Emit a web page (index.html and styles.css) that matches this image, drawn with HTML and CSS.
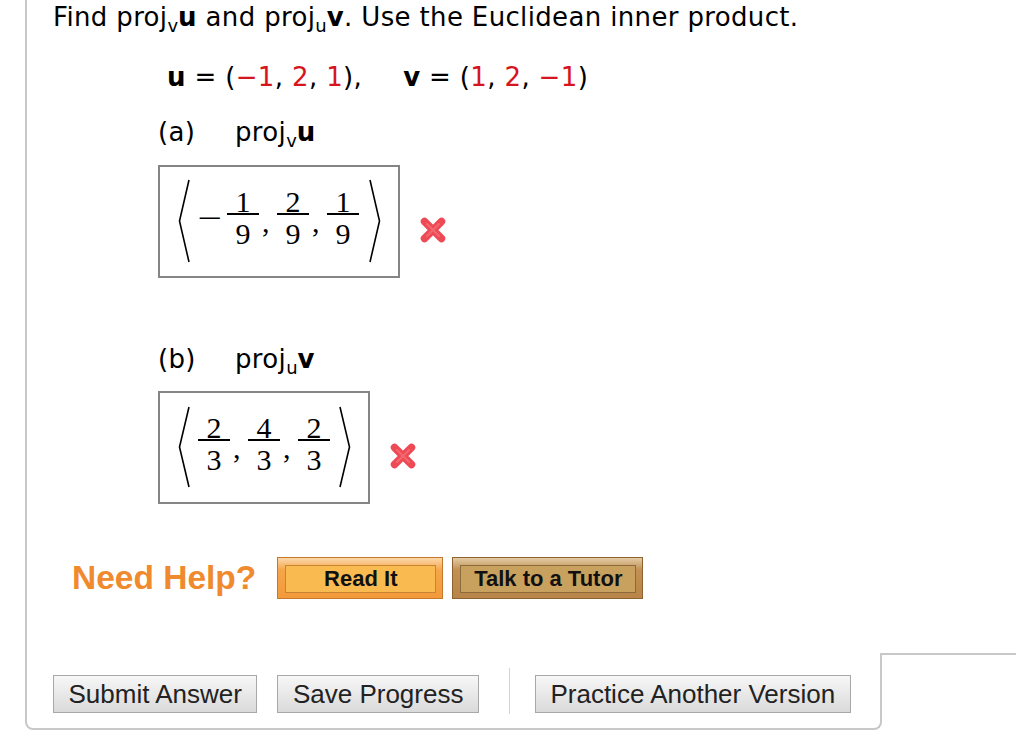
FILE: index.html
```html
<!DOCTYPE html>
<html>
<head>
<meta charset="utf-8">
<link rel="stylesheet" href="styles.css">
</head>
<body>
<div class="page">
  <div class="main">
    <p class="q">Find proj<sub>v</sub><b>u</b> and proj<sub>u</sub><b>v</b>. Use the Euclidean inner product.</p>
    <p class="given"><b>u</b> = (<span class="r">−1</span>, <span class="r">2</span>, <span class="r">1</span>),<span class="gap"></span><b>v</b> = (<span class="r">1</span>, <span class="r">2</span>, <span class="r">−1</span>)</p>

    <div class="part">
      <p class="label"><span class="tag">(a)</span>proj<sub>v</sub><b>u</b></p>
      <div class="answer-row">
        <div class="answer">
          <svg class="br" width="12" height="84" viewBox="0 0 12 84"><polyline points="11,1 1.5,42 11,83" fill="none" stroke="#000" stroke-width="1.6"/></svg>
          <span class="neg">−</span>
          <span class="frac"><span class="num">1</span><span class="den">9</span></span>
          <span class="comma">,</span>
          <span class="frac"><span class="num">2</span><span class="den">9</span></span>
          <span class="comma">,</span>
          <span class="frac"><span class="num">1</span><span class="den">9</span></span>
          <svg class="br br-r" width="12" height="84" viewBox="0 0 12 84"><polyline points="1,1 10.5,42 1,83" fill="none" stroke="#000" stroke-width="1.6"/></svg>
        </div>
        <svg class="wrong" width="28" height="28" viewBox="0 0 28 28"><path d="M5.5 5.5 L22.5 22.5 M22.5 5.5 L5.5 22.5" stroke="#ee4a55" stroke-width="7.5" stroke-linecap="round"/><path d="M8 8 L20 20 M20 8 L8 20" stroke="#f9868c" stroke-width="2" stroke-linecap="round" opacity="0.5"/></svg>
      </div>
    </div>

    <div class="part part-b">
      <p class="label"><span class="tag">(b)</span>proj<sub>u</sub><b>v</b></p>
      <div class="answer-row">
        <div class="answer">
          <svg class="br" width="12" height="84" viewBox="0 0 12 84"><polyline points="11,2 1.5,42 11,82" fill="none" stroke="#000" stroke-width="1.6"/></svg>
          <span class="frac first"><span class="num">2</span><span class="den">3</span></span>
          <span class="comma">,</span>
          <span class="frac"><span class="num">4</span><span class="den">3</span></span>
          <span class="comma">,</span>
          <span class="frac"><span class="num">2</span><span class="den">3</span></span>
          <svg class="br br-r br-rb" width="12" height="84" viewBox="0 0 12 84"><polyline points="1,2 10.5,42 1,82" fill="none" stroke="#000" stroke-width="1.6"/></svg>
        </div>
        <svg class="wrong" width="28" height="28" viewBox="0 0 28 28"><path d="M5.5 5.5 L22.5 22.5 M22.5 5.5 L5.5 22.5" stroke="#ee4a55" stroke-width="7.5" stroke-linecap="round"/><path d="M8 8 L20 20 M20 8 L8 20" stroke="#f9868c" stroke-width="2" stroke-linecap="round" opacity="0.5"/></svg>
      </div>
    </div>

    <div class="help">
      <span class="need">Need Help?</span>
      <a class="hbtn read"><span>Read It</span></a>
      <a class="hbtn talk"><span>Talk to a Tutor</span></a>
    </div>
  </div>
  <div class="bottom">
    <div class="footer">
      <button class="btn">Submit Answer</button>
      <button class="btn">Save Progress</button>
      <span class="vsep"></span>
      <button class="btn">Practice Another Version</button>
    </div>
    <div class="notch"></div>
  </div>
</div>
</body>
</html>
```

FILE: styles.css
```css
body {
  margin: 0;
  font-family: "DejaVu Sans", Verdana, sans-serif;
  color: #000;
  background: #fff;
}

.page {
  margin-left: 25px;
  width: 991px;
}

.main {
  border-left: 2px solid #c8c8c8;
  padding: 1px 0 54px 26px;
}

.q {
  margin: 0;
  font-size: 26px;
  letter-spacing: 0.35px;
  line-height: 32px;
}

sub {
  font-size: 18px;
  line-height: 0;
  vertical-align: -6px;
  letter-spacing: 0;
}

.given {
  margin: 28px 0 0 114px;
  font-size: 26px;
  letter-spacing: 0.35px;
  line-height: 32px;
}

.r {
  color: #d6141e;
}

.gap {
  display: inline-block;
  width: 41px;
}

.part {
  margin-left: 105px;
}

.label {
  margin: 23px 0 0 0;
  font-size: 26px;
  letter-spacing: 0.35px;
  line-height: 32px;
}

.part-b .label {
  margin-top: 65px;
}

.tag {
  display: inline-block;
  width: 77px;
}

.answer-row {
  display: flex;
  align-items: center;
  margin-top: 17px;
}

.part-b .answer-row {
  margin-top: 16px;
}

.answer {
  flex: none;
  display: flex;
  align-items: center;
  border: 2px solid #858585;
  padding: 12px 17px 13px 18px;
  font-family: "Liberation Serif", "Times New Roman", serif;
  font-size: 30px;
}

.answer > * {
  flex: none;
}

.br {
  display: block;
}

.br-r {
  margin-left: 10px;
}

.br-rb {
  margin-left: 9px;
}

.neg {
  display: inline-block;
  width: 24px;
  text-align: center;
  line-height: 32px;
  margin: 0 5px 6px 8px;
  transform: scaleX(1.45);
}

.frac {
  display: block;
  width: 32px;
  margin-bottom: 6px;
  text-align: center;
}

.frac.first {
  margin-left: 8px;
}

.num,
.den {
  display: block;
  line-height: 32px;
}

.num {
  margin-bottom: -5px;
}

.den {
  border-top: 2px solid #000;
  padding-top: 3px;
  height: 32px;
}

.comma {
  width: 18px;
  box-sizing: border-box;
  padding-left: 3px;
  line-height: 32px;
  margin-top: 2px;
}

.wrong {
  margin-left: 19px;
  margin-top: 16px;
}

.help {
  display: flex;
  align-items: center;
  margin: 53px 0 0 19px;
  height: 42px;
}

.need {
  font-family: "Liberation Sans", Arial, sans-serif;
  font-weight: bold;
  font-size: 33.5px;
  color: #f08a2e;
}

.hbtn {
  box-sizing: border-box;
  height: 42px;
  display: flex;
  padding: 7px 6px 5px 7px;
  border: 1px solid;
}

.hbtn span {
  flex: 1;
  display: flex;
  align-items: center;
  justify-content: center;
  border: 1px solid;
  font-family: "Liberation Sans", Arial, sans-serif;
  font-weight: bold;
  font-size: 22px;
  color: #111;
}

.read {
  width: 166px;
  margin-left: 21px;
  border-color: #c4782c;
  background: linear-gradient(#fbd9aa, #f6a54a 30%, #f39a3a);
}

.read span {
  background: #f9bb4f;
  border-color: #c98331;
}

.talk {
  width: 191px;
  margin-left: 9px;
  border-color: #8e6330;
  background: linear-gradient(#e3cba6, #c09052 30%, #b98549);
}

.talk span {
  background: #c9a15f;
  border-color: #8d6a3c;
}

.bottom {
  display: flex;
}

.footer {
  box-sizing: border-box;
  width: 857px;
  border: 2px solid #c8c8c8;
  border-top: 0;
  border-radius: 0 0 8px 8px;
  padding: 15px 0 14px 26px;
  display: flex;
  align-items: flex-end;
}

.notch {
  flex: 1;
  border-top: 2px solid #c8c8c8;
}

.btn {
  font-family: "Liberation Sans", Arial, sans-serif;
  font-size: 26px;
  color: #222;
  height: 38px;
  line-height: 36px;
  padding: 0 14.5px;
  margin: 0 20px 1px 0;
  border: 1px solid #a8a8a8;
  border-radius: 0;
  background: linear-gradient(#f7f7f7, #dadada);
}

.vsep {
  width: 1px;
  height: 46px;
  background: #d4d4d4;
  margin: 0 25px 0 10px;
}
```
